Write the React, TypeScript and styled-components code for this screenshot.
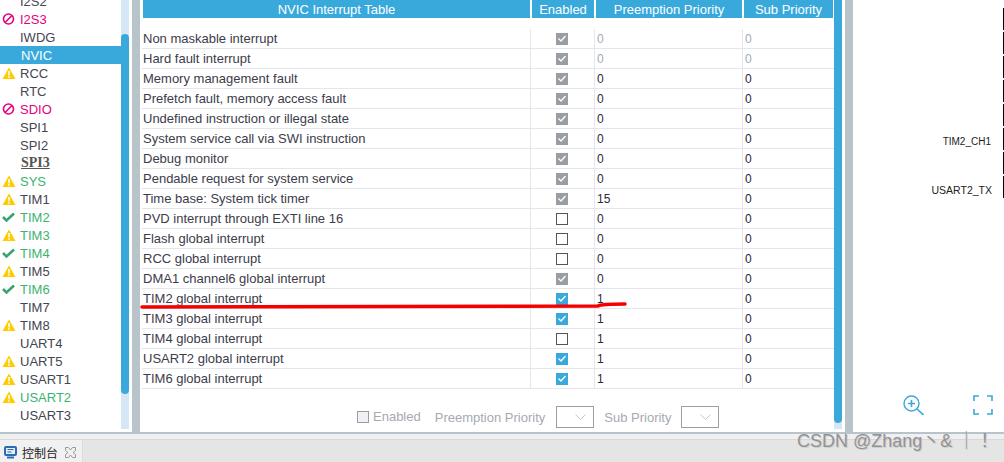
import React from "react";
import styled, { createGlobalStyle } from "styled-components";

const Global = createGlobalStyle`
  html, body { margin: 0; padding: 0; background: #fff; overflow: hidden; }
  body { font-family: "Liberation Sans", Arial, sans-serif; font-size: 12px; }
  #root { height: 462px; width: 1004px; }
`;

const Page = styled.div`
  position: relative;
  width: 1004px;
  height: 462px;
  display: flex;
  flex-direction: column;
  overflow: hidden;
`;
const Workspace = styled.div`
  height: 432px;
  flex: none;
  display: flex;
  background: #fff;
`;
const Sash = styled.div`
  width: 8px;
  flex: none;
  background: #b9c4ca;
  margin-left: ${(p: { $gap: number }) => p.$gap}px;
`;
const ListPanel = styled.div`
  width: 129px;
  height: 429px;
  flex: none;
  display: flex;
  overflow: hidden;
`;
const List = styled.ul`
  list-style: none;
  margin: -8px 0 0;
  padding: 0;
  width: 121px;
  flex: none;
`;
type Tone = "normal" | "pink" | "green";
const toneColor = { normal: "#454552", pink: "#e6007e", green: "#3cb371" };
const ListItem = styled.li<{ $tone: Tone; $selected?: boolean; $bold?: boolean }>`
  height: 18px;
  display: flex;
  align-items: center;
  font-size: 13px;
  color: ${(p) => (p.$selected ? "#fff" : p.$bold ? "#555" : toneColor[p.$tone])};
  background: ${(p) => (p.$selected ? "#39a9dc" : "transparent")};
  font-weight: ${(p) => (p.$bold ? 700 : 400)};
`;
const ItemIcon = styled.span`
  width: 20px;
  flex: none;
  display: flex;
  justify-content: flex-start;
  padding-left: 2px;
  box-sizing: border-box;
`;
const ItemLabel = styled.span<{ $selected?: boolean; $bold?: boolean }>`
  margin-left: ${(p) => (p.$selected ? 1 : p.$bold ? 1 : 0)}px;
  text-decoration: ${(p) => (p.$bold ? "underline" : "none")};
  font-family: ${(p) => (p.$bold ? '"Liberation Serif", serif' : "inherit")};
  font-size: ${(p) => (p.$bold ? 14 : 13)}px;
`;
const Track = styled.div`
  width: 8px;
  flex: none;
  height: 429px;
  background: #d6e6f4;
  display: flex;
`;
const Thumb = styled.div<{ $top: number; $height: number }>`
  width: 8px;
  height: ${(p) => p.$height}px;
  margin-top: ${(p) => p.$top}px;
  background: #39a9dc;
  border-radius: 4px;
`;
const TablePanel = styled.div`
  width: 694px;
  height: 429px;
  flex: none;
  display: flex;
  flex-direction: column;
  padding-left: 2px;
  box-sizing: border-box;
`;
const HeaderRow = styled.div`
  display: grid;
  grid-template-columns: 387px 62px 146px 89px;
  column-gap: 2px;
  height: 18px;
  margin-left: 1px;
  margin-bottom: 11px;
`;
const HeaderCell = styled.div`
  background: #39a9dc;
  color: #fff;
  display: flex;
  align-items: center;
  justify-content: center;
  font-size: 13px;
`;
const Body = styled.div`
  flex: 1;
`;
const Row = styled.div`
  display: grid;
  grid-template-columns: 389px 64px 148px 91px;
  height: 20px;
  border-bottom: 1px solid #e3e6ea;
  box-sizing: border-box;
`;
const NameCell = styled.div`
  display: flex;
  align-items: center;
  padding-left: 1px;
  color: #3c3c4a;
  font-size: 13px;
  border-right: 1px solid #e3e6ea;
`;
const CheckCell = styled.div`
  display: flex;
  align-items: center;
  justify-content: center;
  padding-right: 2px;
  border-right: 1px solid #e3e6ea;
`;
const ValueCell = styled.div<{ $muted?: boolean; $line?: boolean }>`
  display: flex;
  align-items: center;
  padding-left: 2px;
  font-size: 12px;
  color: ${(p) => (p.$muted ? "#a5abb2" : "#2a2a3a")};
  border-right: ${(p) => (p.$line ? "1px solid #e3e6ea" : "none")};
`;
type CheckKind = "grey" | "blue" | "off";
const Check = styled.span<{ $kind: CheckKind }>`
  width: 12px;
  height: 12px;
  box-sizing: border-box;
  display: flex;
  align-items: center;
  justify-content: center;
  background: ${(p) => (p.$kind === "grey" ? "#9a9ea3" : p.$kind === "blue" ? "#39a9dc" : "#fff")};
  border: ${(p) => (p.$kind === "off" ? "1px solid #555" : "none")};
`;
const FormBar = styled.div`
  height: 22px;
  margin-bottom: 1px;
  display: flex;
  align-items: center;
  padding-left: 215px;
  color: #a8a8b2;
  font-size: 13px;
`;
const FormCheck = styled.span`
  width: 12px;
  height: 12px;
  box-sizing: border-box;
  background: #f1f1f5;
  border: 1px solid #9a9ea3;
  margin-right: 4px;
  margin-top: -1px;
`;
const FormLabel = styled.span<{ $left: number; $raise?: boolean }>`
  margin-left: ${(p) => p.$left}px;
  margin-top: ${(p) => (p.$raise ? -1 : 1)}px;
`;
const Select = styled.div<{ $left: number }>`
  width: 38px;
  height: 22px;
  box-sizing: border-box;
  margin-left: ${(p) => p.$left}px;
  border: 1px solid #999fa3;
  display: flex;
  align-items: center;
  justify-content: flex-end;
  padding-right: 7px;
`;
const Canvas = styled.div`
  position: relative;
  flex: 1;
  height: 429px;
`;
const PinLabel = styled.span<{ $top: number; $right: number; $size: number }>`
  position: absolute;
  top: ${(p) => p.$top}px;
  right: ${(p) => p.$right}px;
  font-size: ${(p) => p.$size}px;
  line-height: 14px;
  color: #222;
`;
const PinEdge = styled.span<{ $top: number }>`
  position: absolute;
  right: 0;
  width: 1px;
  height: 22px;
  top: ${(p) => p.$top}px;
  background: #000;
`;
const CanvasTools = styled.div`
  position: absolute;
  left: 50px;
  top: 395px;
  display: flex;
  gap: 49px;
`;
const BottomBar = styled.div`
  flex: 1;
  background: #e5e5e5;
  border-top: 2px solid #b9c4ca;
  display: flex;
  flex-direction: column;
`;
const BarStrip = styled.div`
  height: 5px;
  background: #f0f0f0;
  border-bottom: 1px solid #d8d8d8;
  flex: none;
`;
const Tab = styled.div`
  width: 83px;
  flex: 1;
  display: flex;
  align-items: center;
  background: #f1f1f1;
  border-right: 1px solid #dcdcdc;
  box-sizing: border-box;
  padding: 3px 0 0 4px;
  color: #222;
  font-size: 12px;
  font-family: "Noto Sans CJK SC", sans-serif;
`;
const TabText = styled.span`
  margin-left: 5px;
  margin-right: 7px;
  line-height: 14px;
`;
const Watermark = styled.span`
  position: absolute;
  left: 797px;
  top: 430px;
  font-family: "Liberation Sans", "Noto Sans CJK SC", sans-serif;
  font-size: 18px;
  line-height: 22px;
  color: #939393;
  text-shadow: 1px 1px 0 #cfcfcf;
  white-space: pre;
`;
const RedLine = styled.svg`
  position: absolute;
  left: 0;
  top: 0;
  pointer-events: none;
`;

const Warn = () => (
  <svg width="14" height="12" viewBox="0 0 14 12">
    <path d="M7 0.5 L13.5 12 H0.5 Z" fill="#ffcc00" />
    <rect x="6.2" y="4" width="1.6" height="4.4" fill="#fff" />
    <rect x="6.2" y="9.2" width="1.6" height="1.6" fill="#fff" />
  </svg>
);
const Ban = () => (
  <svg width="14" height="14" viewBox="0 0 14 14" fill="none" stroke="#e6007e" strokeWidth="1.6">
    <circle cx="6.5" cy="7" r="5" />
    <path d="M3 10.5 L10 3.5" />
  </svg>
);
const Tick = () => (
  <svg width="13" height="12" viewBox="0 0 13 12" fill="none" stroke="#3ba272" strokeWidth="2.6">
    <path d="M1 6 L4.5 9.5 L12 2.5" />
  </svg>
);
const CheckMark = () => (
  <svg width="10" height="9" viewBox="0 0 10 9" fill="none" stroke="#fff" strokeWidth="1.3">
    <path d="M1.5 4.5 L4 7 L8.5 2" />
  </svg>
);
const Chevron = () => (
  <svg width="11" height="6" viewBox="0 0 11 6" fill="none" stroke="#c8c8c8" strokeWidth="1">
    <path d="M0.5 0.5 L5.5 5.5 L10.5 0.5" />
  </svg>
);

type Item = { n: string; t?: Tone; i?: "warn" | "ban" | "tick"; sel?: boolean; bold?: boolean };
const items: Item[] = [
  { n: "I2S2" },
  { n: "I2S3", t: "pink", i: "ban" },
  { n: "IWDG" },
  { n: "NVIC", sel: true },
  { n: "RCC", i: "warn" },
  { n: "RTC" },
  { n: "SDIO", t: "pink", i: "ban" },
  { n: "SPI1" },
  { n: "SPI2" },
  { n: "SPI3", bold: true },
  { n: "SYS", t: "green", i: "warn" },
  { n: "TIM1", i: "warn" },
  { n: "TIM2", t: "green", i: "tick" },
  { n: "TIM3", t: "green", i: "warn" },
  { n: "TIM4", t: "green", i: "tick" },
  { n: "TIM5", i: "warn" },
  { n: "TIM6", t: "green", i: "tick" },
  { n: "TIM7" },
  { n: "TIM8", i: "warn" },
  { n: "UART4" },
  { n: "UART5", i: "warn" },
  { n: "USART1", i: "warn" },
  { n: "USART2", t: "green", i: "warn" },
  { n: "USART3" },
  { n: "USB" },
];

type R = [string, CheckKind, string, boolean?];
const rows: R[] = [
  ["Non maskable interrupt", "grey", "0", true],
  ["Hard fault interrupt", "grey", "0", true],
  ["Memory management fault", "grey", "0"],
  ["Prefetch fault, memory access fault", "grey", "0"],
  ["Undefined instruction or illegal state", "grey", "0"],
  ["System service call via SWI instruction", "grey", "0"],
  ["Debug monitor", "grey", "0"],
  ["Pendable request for system service", "grey", "0"],
  ["Time base: System tick timer", "grey", "15"],
  ["PVD interrupt through EXTI line 16", "off", "0"],
  ["Flash global interrupt", "off", "0"],
  ["RCC global interrupt", "off", "0"],
  ["DMA1 channel6 global interrupt", "grey", "0"],
  ["TIM2 global interrupt", "blue", "1"],
  ["TIM3 global interrupt", "blue", "1"],
  ["TIM4 global interrupt", "off", "1"],
  ["USART2 global interrupt", "blue", "1"],
  ["TIM6 global interrupt", "blue", "1"],
];

const edges = [8, 32, 56, 80, 104, 128, 152, 176];

export default function App() {
  return (
    <Page>
      <Global />
      <Workspace>
        <ListPanel>
          <List>
            {items.map((it) => (
              <ListItem key={it.n} $tone={it.t ?? "normal"} $selected={it.sel} $bold={it.bold}>
                <ItemIcon>
                  {it.i === "warn" && <Warn />}
                  {it.i === "ban" && <Ban />}
                  {it.i === "tick" && <Tick />}
                </ItemIcon>
                <ItemLabel $selected={it.sel} $bold={it.bold}>{it.n}</ItemLabel>
              </ListItem>
            ))}
          </List>
          <Track>
            <Thumb $top={34} $height={360} />
          </Track>
        </ListPanel>
        <Sash $gap={3} />
        <TablePanel>
          <HeaderRow>
            <HeaderCell>NVIC Interrupt Table</HeaderCell>
            <HeaderCell>Enabled</HeaderCell>
            <HeaderCell>Preemption Priority</HeaderCell>
            <HeaderCell>Sub Priority</HeaderCell>
          </HeaderRow>
          <Body>
            {rows.map(([name, kind, prio, muted]) => (
              <Row key={name}>
                <NameCell>{name}</NameCell>
                <CheckCell>
                  <Check $kind={kind}>{kind !== "off" && <CheckMark />}</Check>
                </CheckCell>
                <ValueCell $muted={muted} $line>{prio}</ValueCell>
                <ValueCell $muted={muted}>0</ValueCell>
              </Row>
            ))}
          </Body>
          <FormBar>
            <FormCheck />
            <FormLabel $left={0} $raise>Enabled</FormLabel>
            <FormLabel $left={14}>Preemption Priority</FormLabel>
            <Select $left={11}><Chevron /></Select>
            <FormLabel $left={10}>Sub Priority</FormLabel>
            <Select $left={10}><Chevron /></Select>
          </FormBar>
        </TablePanel>
        <Track>
          <Thumb $top={-10} $height={433} />
        </Track>
        <Sash $gap={3} />
        <Canvas>
          {edges.map((t) => (
            <PinEdge key={t} $top={t} />
          ))}
          <PinLabel $top={135} $right={13} $size={10}>TIM2_CH1</PinLabel>
          <PinLabel $top={183} $right={12} $size={10.5}>USART2_TX</PinLabel>
          <CanvasTools>
            <svg width="21" height="20" viewBox="0 0 21 20" fill="none" stroke="#39a9dc" strokeWidth="1.4">
              <circle cx="8.5" cy="8.5" r="7.5" />
              <path d="M8.5 5 V12 M5 8.5 H12" strokeWidth="1.6" />
              <path d="M14 14 L20.5 20" strokeWidth="1.6" />
            </svg>
            <svg width="20" height="20" viewBox="0 0 20 20" fill="none" stroke="#39a9dc" strokeWidth="1.6">
              <path d="M1 6 V1 H6 M14 1 H19 V6 M19 14 V19 H14 M6 19 H1 V14" />
            </svg>
          </CanvasTools>
        </Canvas>
      </Workspace>
      <BottomBar>
        <BarStrip />
        <Tab>
          <svg width="13" height="13" viewBox="0 0 13 13">
            <rect x="1" y="1" width="11" height="8" rx="1" fill="#e4eff8" stroke="#2c6bb0" strokeWidth="2" />
            <path d="M3.5 3.5 H9.5 M3.5 6 H7.5" stroke="#2c6bb0" />
            <path d="M3 11.5 H10" stroke="#2c6bb0" strokeWidth="2" />
          </svg>
          <TabText>控制台</TabText>
          <svg width="11" height="11" viewBox="0 0 11 11" fill="none" stroke="#999" strokeWidth="1">
            <path d="M0.5 0.5 H3.5 L5.5 3 L7.5 0.5 H10.5 V3.5 L8 5.5 L10.5 7.5 V10.5 H7.5 L5.5 8 L3.5 10.5 H0.5 V7.5 L3 5.5 L0.5 3.5 Z" />
          </svg>
        </Tab>
      </BottomBar>
      <Watermark>CSDN @Zhang丶&amp; ｜ ！</Watermark>
      <RedLine width="1004" height="462" viewBox="0 0 1004 462" fill="none">
        <path d="M142 307 C 144 306 300 306.5 598 306 C 600 304.5 610 304 625 304" stroke="#f50000" strokeWidth="3.5" strokeLinecap="round" />
      </RedLine>
    </Page>
  );
}
